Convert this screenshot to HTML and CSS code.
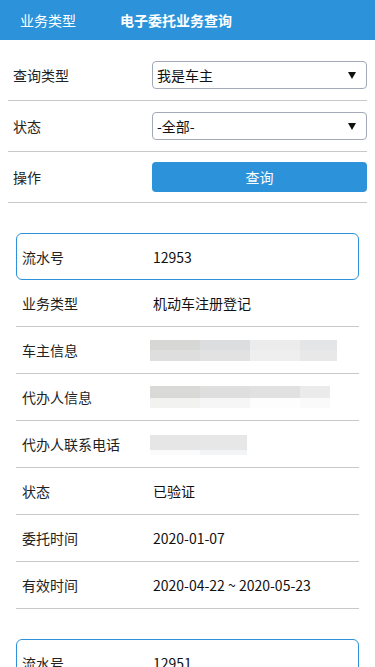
FILE: index.html
```html
<!DOCTYPE html>
<html lang="zh-CN">
<head>
  <meta charset="UTF-8">
  <meta name="viewport" content="width=device-width, initial-scale=1">
  <title>电子委托业务查询</title>
  <link rel="stylesheet" href="styles.css">
</head>
<body>
  <!-- 顶部导航 -->
  <div id="header">
    <span class="nav">业务类型</span>
    <span class="nav current">电子委托业务查询</span>
  </div>

  <!-- 查询条件 -->
  <div id="search">
    <div class="form-row">
      <div class="form-label">查询类型</div>
      <div class="select"><span>我是车主</span><i class="arrow"></i></div>
    </div>
    <div class="form-row">
      <div class="form-label">状态</div>
      <div class="select"><span>-全部-</span><i class="arrow"></i></div>
    </div>
    <div class="form-row">
      <div class="form-label">操作</div>
      <button class="btn-query">查询</button>
    </div>
  </div>

  <!-- 查询结果 -->
  <div id="list">
    <div class="record">
      <div class="item head"><div class="key">流水号</div><div class="val">12953</div></div>
      <div class="item"><div class="key">业务类型</div><div class="val">机动车注册登记</div></div>
      <div class="item">
        <div class="key">车主信息</div>
        <div class="val"><div class="blur owner"><b></b><b></b><b></b><b></b><b></b><b></b><b></b><b></b></div></div>
      </div>
      <div class="item">
        <div class="key">代办人信息</div>
        <div class="val"><div class="blur agent"><b></b><b></b><b></b><b></b><b></b><b></b><b></b><b></b></div></div>
      </div>
      <div class="item">
        <div class="key">代办人联系电话</div>
        <div class="val"><div class="blur phone"><b></b><b></b><b></b><b></b></div></div>
      </div>
      <div class="item"><div class="key">状态</div><div class="val">已验证</div></div>
      <div class="item"><div class="key">委托时间</div><div class="val">2020-01-07</div></div>
      <div class="item"><div class="key">有效时间</div><div class="val">2020-04-22 ~ 2020-05-23</div></div>
    </div>

    <div class="record">
      <div class="item head"><div class="key">流水号</div><div class="val">12951</div></div>
      <div class="item"><div class="key">业务类型</div><div class="val">机动车注册登记</div></div>
      <div class="item"><div class="key">状态</div><div class="val">已验证</div></div>
    </div>
  </div>
</body>
</html>
```

FILE: styles.css
```css
body {
  margin: 0;
  font-family: "Noto Sans CJK SC", "Noto Sans", sans-serif;
  font-size: 14px;
  color: #222;
  background: #fff;
}
/* 顶部导航 */
#header {
  height: 40px;
  background-color: #2c93da;
  display: flex;
  align-items: center;
  padding-left: 20px;
  gap: 44px;
}
.nav {
  color: #fff;
  font-size: 14px;
}
.nav.current {
  font-weight: bold;
}
/* 查询条件 */
#search {
  margin: 0 8px;
  padding-top: 10px;
}
.form-row {
  height: 50px;
  display: flex;
  align-items: center;
  border-bottom: 1px solid #c8c8c8;
}
.form-label {
  width: 139px;
  padding-left: 5px;
  flex: none;
}
.select {
  flex: 1;
  height: 26px;
  border: 1px solid #a3a9b6;
  border-radius: 4px;
  display: flex;
  align-items: center;
  justify-content: space-between;
  padding: 0 10px 0 4px;
  color: #111;
}
.arrow {
  width: 0;
  height: 0;
  border-left: 4px solid transparent;
  border-right: 4px solid transparent;
  border-top: 7px solid #111;
}
.btn-query {
  flex: 1;
  height: 30px;
  border: none;
  border-radius: 4px;
  background-color: #2c93da;
  color: #fff;
  font-family: inherit;
  font-size: 14px;
  padding: 0;
}
/* 查询结果 */
#list {
  margin: 0 16px;
}
.record {
  margin-top: 30px;
}
.item {
  height: 46px;
  display: flex;
  align-items: center;
  border-bottom: 1px solid #c8c8c8;
  padding-left: 6px;
}
.item.head {
  height: 45px;
  border: 1px solid #2c93da;
  border-radius: 6px;
  padding-left: 5px;
}
.key {
  width: 131px;
  flex: none;
  color: #222;
}
.val {
  color: #111;
}
/* 打码区域 */
.blur {
  display: grid;
  margin-left: -3px;
}
.blur b {
  display: block;
}
.blur.owner {
  grid-template-columns: 50px 50px 50px 37px;
  grid-template-rows: 10px 11px;
}
.owner b:nth-child(1) { background: #d7d7d6; }
.owner b:nth-child(2) { background: #dcdddf; }
.owner b:nth-child(3) { background: #ececec; }
.owner b:nth-child(4) { background: #e4e5e6; }
.owner b:nth-child(5) { background: #dedede; }
.owner b:nth-child(6) { background: #e2e2e2; }
.owner b:nth-child(7) { background: #efefef; }
.owner b:nth-child(8) { background: #e8e8e8; }
.blur.agent {
  grid-template-columns: 50px 50px 50px 30px;
  grid-template-rows: 12px 10px;
}
.agent b:nth-child(1) { background: #d9d9d8; }
.agent b:nth-child(2) { background: #dedede; }
.agent b:nth-child(3) { background: #e1e1e1; }
.agent b:nth-child(4) { background: #ebebeb; }
.agent b:nth-child(5) { background: #f2f2f1; }
.agent b:nth-child(6) { background: #f6f6f6; }
.agent b:nth-child(7) { background: #fdfdfd; }
.agent b:nth-child(8) { background: #fafafa; }
.blur.phone {
  grid-template-columns: 50px 47px;
  grid-template-rows: 15px 5px;
  margin-top: 2px;
}
.phone b:nth-child(1) { background: #e6e6e6; }
.phone b:nth-child(2) { background: #e7e7e7; }
.phone b:nth-child(3) { background: #fbfbfb; }
.phone b:nth-child(4) { background: #f3f4f6; }
```
